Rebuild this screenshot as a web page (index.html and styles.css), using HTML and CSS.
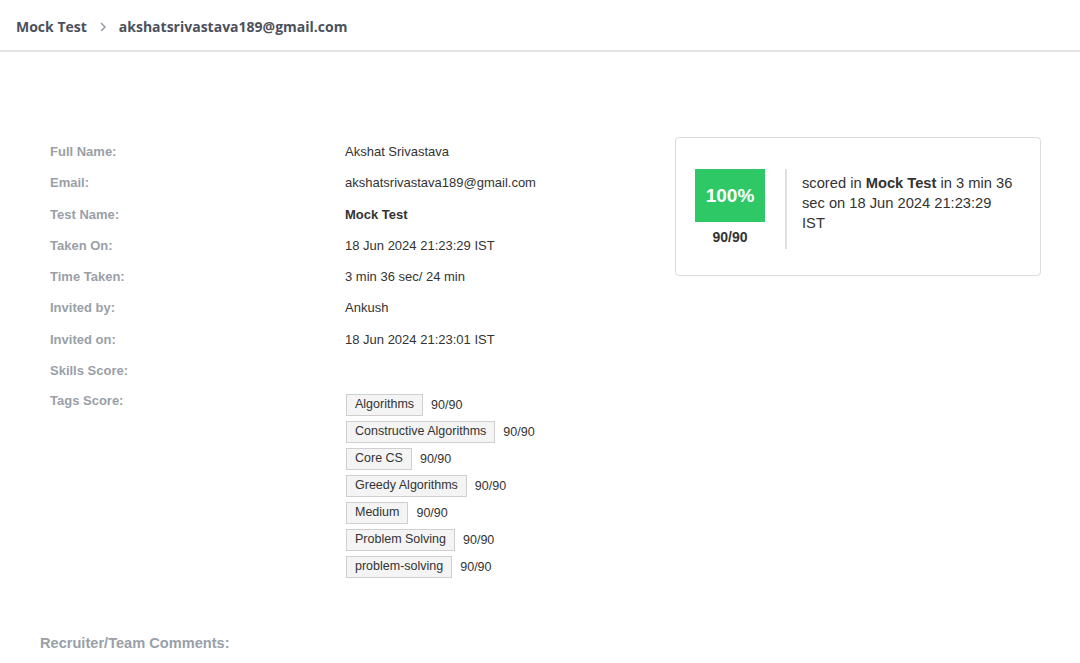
FILE: index.html
```html
<!DOCTYPE html>
<html>
<head>
    <title>Mock Test - akshatsrivastava189@gmail.com</title>
    <link rel="stylesheet" href="styles.css">
</head>
<body>
    <div class="topbar">
        <span class="crumb">Mock Test</span>
        <svg class="chev" width="8" height="10" viewBox="0 0 8 10"><path d="M2 1l4 4-4 4" fill="none" stroke="#9aa0a8" stroke-width="1.6"/></svg>
        <span class="crumb">akshatsrivastava189@gmail.com</span>
    </div>

    <div class="report">
        <div class="details">
            <div class="row"><div class="label">Full Name:</div><div class="value">Akshat Srivastava</div></div>
            <div class="row"><div class="label">Email:</div><div class="value">akshatsrivastava189@gmail.com</div></div>
            <div class="row"><div class="label">Test Name:</div><div class="value bold">Mock Test</div></div>
            <div class="row"><div class="label">Taken On:</div><div class="value">18 Jun 2024 21:23:29 IST</div></div>
            <div class="row"><div class="label">Time Taken:</div><div class="value">3 min 36 sec/ 24 min</div></div>
            <div class="row"><div class="label">Invited by:</div><div class="value">Ankush</div></div>
            <div class="row"><div class="label">Invited on:</div><div class="value">18 Jun 2024 21:23:01 IST</div></div>
            <div class="row"><div class="label">Skills Score:</div><div class="value"></div></div>
            <div class="row tags-row">
                <div class="label">Tags Score:</div>
                <div class="tags">
                    <div class="tag-line"><span class="tag">Algorithms</span><span class="tag-score">90/90</span></div>
                    <div class="tag-line"><span class="tag">Constructive Algorithms</span><span class="tag-score">90/90</span></div>
                    <div class="tag-line"><span class="tag">Core CS</span><span class="tag-score">90/90</span></div>
                    <div class="tag-line"><span class="tag">Greedy Algorithms</span><span class="tag-score">90/90</span></div>
                    <div class="tag-line"><span class="tag">Medium</span><span class="tag-score">90/90</span></div>
                    <div class="tag-line"><span class="tag">Problem Solving</span><span class="tag-score">90/90</span></div>
                    <div class="tag-line"><span class="tag">problem-solving</span><span class="tag-score">90/90</span></div>
                </div>
            </div>
        </div>

        <div class="score-card">
            <div class="score">
                <div class="percent">100%</div>
                <div class="points">90/90</div>
            </div>
            <div class="summary">scored in <b>Mock Test</b> in 3 min 36 sec on 18 Jun 2024 21:23:29 IST</div>
        </div>
    </div>

    <div class="comments">Recruiter/Team Comments:</div>
</body>
</html>
```

FILE: styles.css
```css
body {
    margin: 0;
    font-family: "Liberation Sans", Arial, sans-serif;
    color: #333;
    background: #fff;
}

.topbar {
    height: 52px;
    box-sizing: border-box;
    border-bottom: 2px solid #e2e3e5;
    display: flex;
    align-items: center;
    padding: 2px 16px 0;
    gap: 10px;
}

.crumb {
    font-family: "Open Sans", sans-serif;
    font-weight: 700;
    font-size: 14px;
    color: #4b515c;
}

.chev {
    margin: 1px 2px 0;
}

.report {
    display: flex;
    padding: 84px 0 0 50px;
}

.details {
    width: 560px;
}

.row {
    display: flex;
    height: 31.25px;
    align-items: center;
    font-size: 13px;
}

.label {
    width: 295px;
    font-weight: 700;
    color: #9a9fa8;
}

.value {
    color: #333;
}

.bold {
    font-weight: 700;
}

.tags-row {
    height: auto;
    align-items: flex-start;
}

.tags-row .label {
    margin-top: 7px;
}

.tags {
    display: flex;
    flex-direction: column;
    gap: 5px;
    padding-top: 8px;
}

.tag-line {
    display: flex;
    align-items: center;
}

.tag {
    display: inline-block;
    margin-left: 1px;
    padding: 2px 8px 3px;
    line-height: 15px;
    border: 1px solid #cfcfcf;
    background: #f4f4f4;
    font-size: 12.5px;
    color: #333;
}

.tag-score {
    margin-left: 8px;
    font-size: 12.5px;
    color: #333;
}

.score-card {
    margin: 1px 0 0 65px;
    width: 366px;
    height: 139px;
    box-sizing: border-box;
    border: 1px solid #dcdcdc;
    border-radius: 4px;
    display: flex;
    align-items: flex-start;
    padding: 31px 0 0 19px;
}

.score {
    width: 70px;
    text-align: center;
    padding-right: 20px;
    border-right: 2px solid #e0e0e0;
    height: 80px;
}

.percent {
    background: #2ec866;
    color: #fff;
    font-weight: 700;
    font-size: 19px;
    height: 53px;
    line-height: 53px;
}

.points {
    margin-top: 7px;
    font-weight: 700;
    font-size: 14px;
    color: #333;
}

.summary {
    margin: 4px 0 0 15px;
    width: 214px;
    font-size: 14.7px;
    line-height: 20px;
    color: #333;
}

.comments {
    margin: 57px 0 0 40px;
    font-size: 14.6px;
    font-weight: 700;
    color: #9a9fa8;
}
```
